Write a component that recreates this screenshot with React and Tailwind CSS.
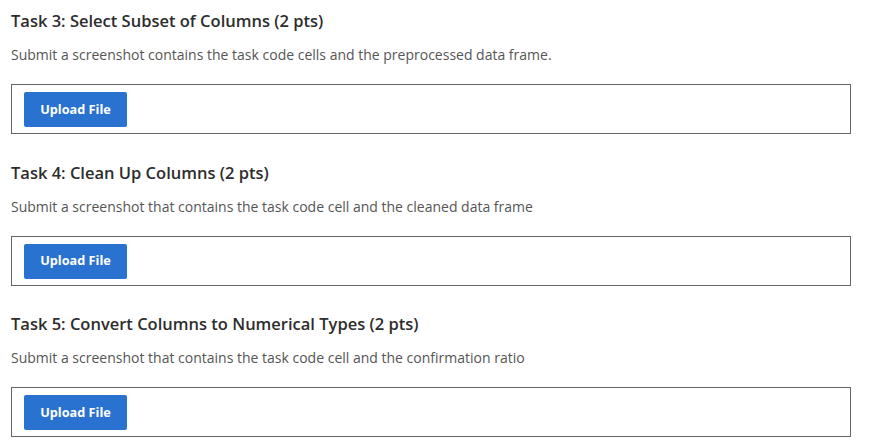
import React from "react";

const tasks = [
  {
    title: "Task 3: Select Subset of Columns (2 pts)",
    text: "Submit a screenshot contains the task code cells and the preprocessed data frame.",
  },
  {
    title: "Task 4: Clean Up Columns (2 pts)",
    text: "Submit a screenshot that contains the task code cell and the cleaned data frame",
  },
  {
    title: "Task 5: Convert Columns to Numerical Types (2 pts)",
    text: "Submit a screenshot that contains the task code cell and the confirmation ratio",
  },
];

function TaskUpload({ title, text }) {
  return (
    <div className="mb-[26.5px]">
      <h3 className="text-[16.5px] leading-[24px] font-semibold text-[#2d2d2d]">{title}</h3>
      <p className="mt-[12px] text-[14px] leading-[20px] text-[#555555]">{text}</p>
      {/* upload box */}
      <div className="mt-[19px] w-[840px] h-[50px] border border-[#666666] pl-[12px] pt-[7px]">
        <button className="w-[103px] h-[35px] rounded-[2px] bg-[#2a72cf] text-white text-[12.7px] font-bold">
          Upload File
        </button>
      </div>
    </div>
  );
}

export default function App() {
  return (
    <div
      className="min-h-screen bg-white pl-[11px] pt-[9px]"
      style={{ fontFamily: '"Open Sans", "Noto Sans", sans-serif' }}
    >
      {tasks.map((t) => (
        <TaskUpload key={t.title} title={t.title} text={t.text} />
      ))}
    </div>
  );
}
